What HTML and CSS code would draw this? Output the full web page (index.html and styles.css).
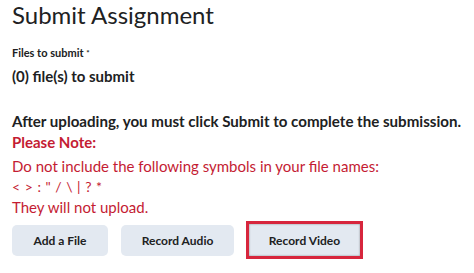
FILE: index.html
```html
<!DOCTYPE html>
<html>
<head>
<meta charset="utf-8">
<link rel="stylesheet" href="styles.css">
</head>
<body>
<div class="page">
  <h1 class="title">Submit Assignment</h1>
  <div class="label">Files to submit <span class="req">*</span></div>
  <div class="count">(0) file(s) to submit</div>
  <p class="after">After uploading, you must click Submit to complete the submission.</p>
  <div class="note">
    <div class="note-head">Please Note:</div>
    <div class="note-line">Do not include the following symbols in your file names:</div>
    <div class="symbols">&lt; &gt; : " / \ | ? *</div>
    <div class="note-line last">They will not upload.</div>
  </div>
  <div class="buttons">
    <button class="btn btn-file">Add a File</button>
    <button class="btn btn-audio">Record Audio</button>
    <span class="highlight"><button class="btn btn-video">Record Video</button></span>
  </div>
</div>
</body>
</html>
```
FILE: styles.css
```css
html, body {
  margin: 0;
  padding: 0;
  background: #fff;
}
.page {
  font-family: Lato, "Open Sans", sans-serif;
  color: #202122;
  padding: 0 12px;
}
.title {
  margin: 0;
  font-weight: 400;
  font-size: 24px;
  line-height: 30px;
}
.label {
  margin-top: 16px;
  font-size: 11px;
  font-weight: 700;
  line-height: 14px;
}
.req {
  font-size: 8px;
  vertical-align: top;
}
.count {
  margin-top: 6px;
  font-size: 15px;
  font-weight: 700;
  line-height: 20px;
}
.after {
  margin: 25px 0 0;
  font-size: 15.1px;
  font-weight: 700;
  line-height: 20px;
}
.note {
  color: #c41c33;
}
.note-head {
  margin-top: 1px;
  font-size: 15px;
  font-weight: 700;
  line-height: 20px;
}
.note-line {
  margin-top: 2px;
  font-size: 15px;
  line-height: 24px;
}
.symbols {
  font-size: 14px;
  line-height: 18px;
  word-spacing: 1px;
}
.note-line.last {
  margin-top: 1px;
  line-height: 20px;
}
.buttons {
  display: flex;
  align-items: center;
  gap: 13px;
  margin-top: 4px;
}
.btn {
  font-family: Lato, "Open Sans", sans-serif;
  font-weight: 700;
  font-size: 12px;
  color: #202122;
  background: #e3e9f1;
  border: none;
  border-radius: 5px;
  height: 31px;
  padding: 0;
}
.btn-file { width: 96px; }
.btn-audio { width: 113px; }
.btn-video {
  width: 111px;
  height: 32px;
  border-radius: 0;
  box-shadow: inset 0 0 2px rgba(0,0,0,0.45);
}
.highlight {
  display: inline-flex;
  border: 3px solid #d7263d;
  margin-left: -1px;
}
```
